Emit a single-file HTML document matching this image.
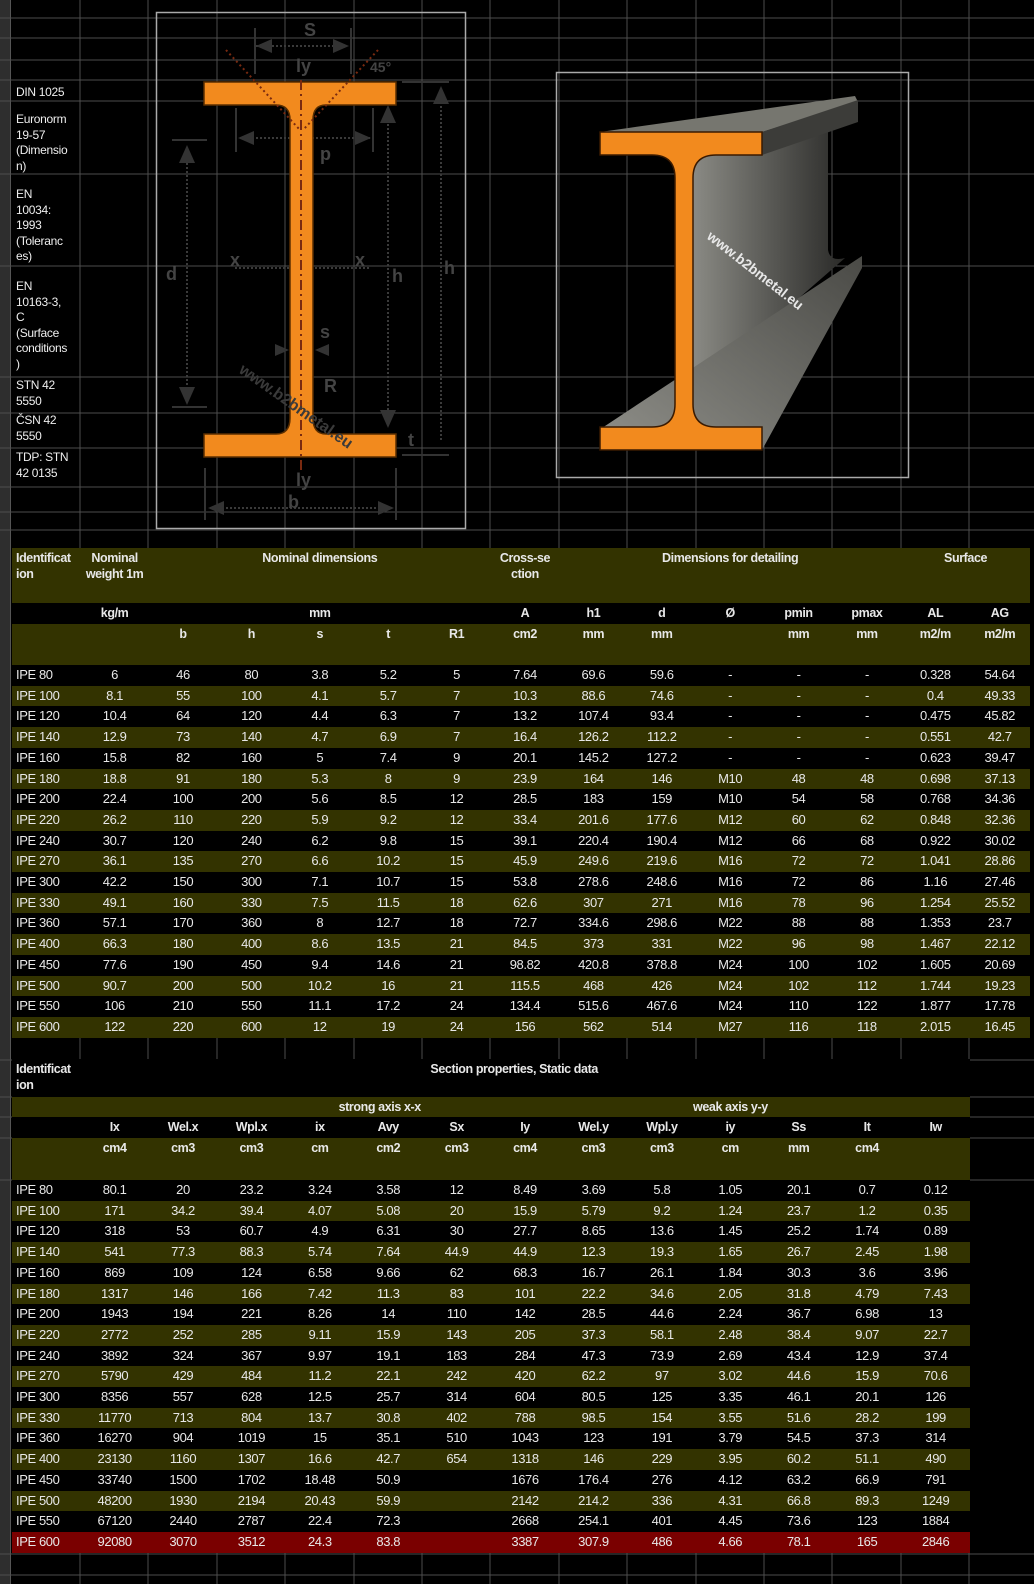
<!DOCTYPE html>
<html><head><meta charset="utf-8">
<style>
html,body{margin:0;padding:0;background:#000;}
body{width:1034px;height:1584px;position:relative;overflow:hidden;font-family:"Liberation Sans",sans-serif;color:#e8e8e8;}
.grid{position:absolute;left:0;top:0;}
.side{position:absolute;left:0;top:0;width:10px;height:1584px;background:#2e2e2e;border-right:1px solid #555;}
.std{position:absolute;left:16px;font-size:12px;line-height:15.6px;color:#eee;letter-spacing:-0.3px;}
table{position:absolute;border-collapse:collapse;table-layout:fixed;font-size:13px;}
td{padding:0;text-align:center;overflow:hidden;white-space:nowrap;letter-spacing:-0.4px;}
td:first-child{text-align:left;padding-left:4px;}
.o{background:#333300;}
.b{background:#000;}
.r{background:#7a0000;}
.h td{font-weight:bold;font-size:12.5px;vertical-align:top;padding-top:3px;white-space:normal;line-height:15.5px;}
.d td{height:20.7px;line-height:20.7px;}
</style></head><body>
<div class="side"></div>
<svg class="grid" width="1034" height="1584" viewBox="0 0 1034 1584">
<g stroke="#4d4d4d" stroke-width="1">
<line x1="80" y1="0" x2="80" y2="1584"/><line x1="148" y1="0" x2="148" y2="1584"/><line x1="217" y1="0" x2="217" y2="1584"/><line x1="285" y1="0" x2="285" y2="1584"/><line x1="354" y1="0" x2="354" y2="1584"/><line x1="422" y1="0" x2="422" y2="1584"/><line x1="490" y1="0" x2="490" y2="1584"/><line x1="559" y1="0" x2="559" y2="1584"/><line x1="627" y1="0" x2="627" y2="1584"/><line x1="696" y1="0" x2="696" y2="1584"/><line x1="764" y1="0" x2="764" y2="1584"/><line x1="832" y1="0" x2="832" y2="1584"/><line x1="901" y1="0" x2="901" y2="1584"/><line x1="969" y1="0" x2="969" y2="1584"/>
<line x1="0" y1="18" x2="1034" y2="18"/><line x1="0" y1="38" x2="1034" y2="38"/><line x1="0" y1="60" x2="1034" y2="60"/><line x1="0" y1="80" x2="1034" y2="80"/><line x1="0" y1="101" x2="1034" y2="101"/><line x1="0" y1="174" x2="1034" y2="174"/><line x1="0" y1="266" x2="1034" y2="266"/><line x1="0" y1="377" x2="1034" y2="377"/><line x1="0" y1="413" x2="1034" y2="413"/><line x1="0" y1="448" x2="1034" y2="448"/><line x1="0" y1="487" x2="1034" y2="487"/><line x1="0" y1="512" x2="1034" y2="512"/><line x1="0" y1="530" x2="1034" y2="530"/>
<line x1="0" y1="1060" x2="1034" y2="1060"/><line x1="0" y1="1097" x2="1034" y2="1097"/><line x1="0" y1="1117" x2="1034" y2="1117"/><line x1="0" y1="1138" x2="1034" y2="1138"/><line x1="0" y1="1180" x2="1034" y2="1180"/><line x1="0" y1="1554" x2="1034" y2="1554"/><line x1="0" y1="1575" x2="1034" y2="1575"/>
</g>
<!-- left drawing -->
<rect x="156.5" y="12.5" width="309" height="516" fill="none" stroke="#aaa" stroke-width="1.5"/>
<g fill="none" stroke="#3a3a3a" stroke-width="2" stroke-dasharray="2 2">
<line x1="187" y1="155" x2="187" y2="400"/><line x1="388" y1="120" x2="388" y2="425"/><line x1="441" y1="90" x2="441" y2="440"/>
<line x1="256" y1="46" x2="346" y2="46"/><line x1="240" y1="138" x2="370" y2="138"/><line x1="210" y1="508" x2="392" y2="508"/>
<line x1="235" y1="268" x2="370" y2="268"/>
</g>
<g stroke="#333" stroke-width="2"><line x1="255" y1="28" x2="255" y2="74"/><line x1="351" y1="28" x2="351" y2="74"/><line x1="236" y1="108" x2="236" y2="152"/><line x1="373" y1="108" x2="373" y2="152"/><line x1="172" y1="140" x2="207" y2="140"/><line x1="172" y1="407" x2="207" y2="407"/><line x1="402" y1="82" x2="449" y2="82"/><line x1="402" y1="455" x2="449" y2="455"/><line x1="205" y1="468" x2="205" y2="520"/><line x1="396" y1="468" x2="396" y2="520"/></g>
<g fill="#333"><path d="M187 145 l-8 18 h16z"/><path d="M187 405 l-8 -18 h16z"/><path d="M441 86 l-8 18 h16z"/><path d="M388 105 l-8 18 h16z"/><path d="M388 428 l-8 -18 h16z"/><path d="M256 46 l16 -7 v14z"/><path d="M349 46 l-16 -7 v14z"/><path d="M238 138 l16 -7 v14z"/><path d="M371 138 l-16 -7 v14z"/><path d="M208 508 l16 -7 v14z"/><path d="M394 508 l-16 -7 v14z"/><path d="M289 350 l-14 -6 v12z"/><path d="M315 350 l14 -6 v12z"/></g>
<path d="M204 82 H396 V105 H326 Q313 105 313 120 V418 Q313 434 326 434 H396 V457 H204 V434 H276 Q290 434 290 418 V120 Q290 105 276 105 H204 Z" fill="#f28a1e" stroke="#5a2e00" stroke-width="1.5"/>
<g stroke="#7a2a10" stroke-width="2" stroke-dasharray="2 3" fill="none"><line x1="226" y1="50" x2="300" y2="130"/><line x1="378" y1="50" x2="303" y2="130"/><line x1="301" y1="80" x2="301" y2="470" stroke-dasharray="10 4 2 4"/></g>
<g font-family="Liberation Sans,sans-serif" font-weight="bold" fill="#444" font-size="18"><text x="304" y="36">S</text><text x="296" y="72">ly</text><text x="320" y="160">p</text><text x="166" y="280">d</text><text x="230" y="266">x</text><text x="355" y="266">x</text><text x="392" y="282">h</text><text x="444" y="274">h</text><text x="320" y="338">s</text><text x="324" y="392">R</text><text x="296" y="486">ly</text><text x="288" y="508">b</text><text x="408" y="446">t</text><text x="370" y="72" font-size="14">45°</text></g>
<text x="238" y="372" transform="rotate(35 238 372)" font-family="Liberation Sans,sans-serif" font-weight="bold" font-size="16" fill="#3a3a3a">www.b2bmetal.eu</text>
<!-- right drawing -->
<rect x="556.5" y="72.5" width="352" height="405" fill="none" stroke="#aaa" stroke-width="1.5"/>
<defs>
<linearGradient id="g1" x1="0" x2="1"><stop offset="0" stop-color="#8a8a84"/><stop offset="1" stop-color="#2a2a28"/></linearGradient>
<linearGradient id="g2" x1="0" y1="1" x2="1" y2="0"><stop offset="0" stop-color="#8f8f89"/><stop offset="1" stop-color="#4a4a46"/></linearGradient>
</defs>
<path d="M693 150 L828 118 V250 Q830 262 845 258 L693 390 Z" fill="url(#g1)"/>
<path d="M600 132 L855 96 L858 102 L762 132 Z" fill="#76766f"/>
<path d="M762 132 L858 100 V122 L762 155 Z" fill="#3c3c39"/>
<path d="M602 428 L862 256 V268 L762 450 L762 428 Z" fill="url(#g2)"/>
<path d="M600 132 H762 V155 H716 Q693 155 693 178 V404 Q693 427 716 427 H762 V450 H600 V427 H652 Q675 427 675 404 V178 Q675 155 652 155 H600 Z" fill="#f28a1e" stroke="#3a1a00" stroke-width="1.5"/>
<text x="706" y="238" transform="rotate(38 706 238)" font-family="Liberation Sans,sans-serif" font-weight="bold" font-size="14" fill="#e8e8e8">www.b2bmetal.eu</text>
</svg>

<div class="std" style="top:85px">DIN 1025</div>
<div class="std" style="top:112px">Euronorm<br>19-57<br>(Dimensio<br>n)</div>
<div class="std" style="top:187px">EN<br>10034:<br>1993<br>(Toleranc<br>es)</div>
<div class="std" style="top:279px">EN<br>10163-3,<br>C<br>(Surface<br>conditions<br>)</div>
<div class="std" style="top:378px">STN 42<br>5550</div>
<div class="std" style="top:413px">ČSN 42<br>5550</div>
<div class="std" style="top:450px">TDP: STN<br>42 0135</div>

<table style="left:12px;top:548px;width:1018px">
<colgroup><col style="width:68.4px"><col style="width:68.4px"><col style="width:68.4px"><col style="width:68.4px"><col style="width:68.4px"><col style="width:68.4px"><col style="width:68.4px"><col style="width:68.4px"><col style="width:68.4px"><col style="width:68.4px"><col style="width:68.4px"><col style="width:68.4px"><col style="width:68.4px"><col style="width:68.4px"><col style="width:60.4px"></colgroup>
<tr class="h o" style="height:55px"><td>Identificat ion</td><td>Nominal weight 1m</td><td colspan="5">Nominal dimensions</td><td>Cross-se ction</td><td colspan="5">Dimensions for detailing</td><td colspan="2">Surface</td></tr>
<tr class="h b" style="height:21px"><td></td><td>kg/m</td><td colspan="5">mm</td><td>A</td><td>h1</td><td>d</td><td>Ø</td><td>pmin</td><td>pmax</td><td>AL</td><td>AG</td></tr>
<tr class="h o" style="height:41px"><td></td><td></td><td>b</td><td>h</td><td>s</td><td>t</td><td>R1</td><td>cm2</td><td>mm</td><td>mm</td><td></td><td>mm</td><td>mm</td><td>m2/m</td><td>m2/m</td></tr>
<tr class="d b"><td>IPE 80</td><td>6</td><td>46</td><td>80</td><td>3.8</td><td>5.2</td><td>5</td><td>7.64</td><td>69.6</td><td>59.6</td><td>-</td><td>-</td><td>-</td><td>0.328</td><td>54.64</td></tr>
<tr class="d o"><td>IPE 100</td><td>8.1</td><td>55</td><td>100</td><td>4.1</td><td>5.7</td><td>7</td><td>10.3</td><td>88.6</td><td>74.6</td><td>-</td><td>-</td><td>-</td><td>0.4</td><td>49.33</td></tr>
<tr class="d b"><td>IPE 120</td><td>10.4</td><td>64</td><td>120</td><td>4.4</td><td>6.3</td><td>7</td><td>13.2</td><td>107.4</td><td>93.4</td><td>-</td><td>-</td><td>-</td><td>0.475</td><td>45.82</td></tr>
<tr class="d o"><td>IPE 140</td><td>12.9</td><td>73</td><td>140</td><td>4.7</td><td>6.9</td><td>7</td><td>16.4</td><td>126.2</td><td>112.2</td><td>-</td><td>-</td><td>-</td><td>0.551</td><td>42.7</td></tr>
<tr class="d b"><td>IPE 160</td><td>15.8</td><td>82</td><td>160</td><td>5</td><td>7.4</td><td>9</td><td>20.1</td><td>145.2</td><td>127.2</td><td>-</td><td>-</td><td>-</td><td>0.623</td><td>39.47</td></tr>
<tr class="d o"><td>IPE 180</td><td>18.8</td><td>91</td><td>180</td><td>5.3</td><td>8</td><td>9</td><td>23.9</td><td>164</td><td>146</td><td>M10</td><td>48</td><td>48</td><td>0.698</td><td>37.13</td></tr>
<tr class="d b"><td>IPE 200</td><td>22.4</td><td>100</td><td>200</td><td>5.6</td><td>8.5</td><td>12</td><td>28.5</td><td>183</td><td>159</td><td>M10</td><td>54</td><td>58</td><td>0.768</td><td>34.36</td></tr>
<tr class="d o"><td>IPE 220</td><td>26.2</td><td>110</td><td>220</td><td>5.9</td><td>9.2</td><td>12</td><td>33.4</td><td>201.6</td><td>177.6</td><td>M12</td><td>60</td><td>62</td><td>0.848</td><td>32.36</td></tr>
<tr class="d b"><td>IPE 240</td><td>30.7</td><td>120</td><td>240</td><td>6.2</td><td>9.8</td><td>15</td><td>39.1</td><td>220.4</td><td>190.4</td><td>M12</td><td>66</td><td>68</td><td>0.922</td><td>30.02</td></tr>
<tr class="d o"><td>IPE 270</td><td>36.1</td><td>135</td><td>270</td><td>6.6</td><td>10.2</td><td>15</td><td>45.9</td><td>249.6</td><td>219.6</td><td>M16</td><td>72</td><td>72</td><td>1.041</td><td>28.86</td></tr>
<tr class="d b"><td>IPE 300</td><td>42.2</td><td>150</td><td>300</td><td>7.1</td><td>10.7</td><td>15</td><td>53.8</td><td>278.6</td><td>248.6</td><td>M16</td><td>72</td><td>86</td><td>1.16</td><td>27.46</td></tr>
<tr class="d o"><td>IPE 330</td><td>49.1</td><td>160</td><td>330</td><td>7.5</td><td>11.5</td><td>18</td><td>62.6</td><td>307</td><td>271</td><td>M16</td><td>78</td><td>96</td><td>1.254</td><td>25.52</td></tr>
<tr class="d b"><td>IPE 360</td><td>57.1</td><td>170</td><td>360</td><td>8</td><td>12.7</td><td>18</td><td>72.7</td><td>334.6</td><td>298.6</td><td>M22</td><td>88</td><td>88</td><td>1.353</td><td>23.7</td></tr>
<tr class="d o"><td>IPE 400</td><td>66.3</td><td>180</td><td>400</td><td>8.6</td><td>13.5</td><td>21</td><td>84.5</td><td>373</td><td>331</td><td>M22</td><td>96</td><td>98</td><td>1.467</td><td>22.12</td></tr>
<tr class="d b"><td>IPE 450</td><td>77.6</td><td>190</td><td>450</td><td>9.4</td><td>14.6</td><td>21</td><td>98.82</td><td>420.8</td><td>378.8</td><td>M24</td><td>100</td><td>102</td><td>1.605</td><td>20.69</td></tr>
<tr class="d o"><td>IPE 500</td><td>90.7</td><td>200</td><td>500</td><td>10.2</td><td>16</td><td>21</td><td>115.5</td><td>468</td><td>426</td><td>M24</td><td>102</td><td>112</td><td>1.744</td><td>19.23</td></tr>
<tr class="d b"><td>IPE 550</td><td>106</td><td>210</td><td>550</td><td>11.1</td><td>17.2</td><td>24</td><td>134.4</td><td>515.6</td><td>467.6</td><td>M24</td><td>110</td><td>122</td><td>1.877</td><td>17.78</td></tr>
<tr class="d o"><td>IPE 600</td><td>122</td><td>220</td><td>600</td><td>12</td><td>19</td><td>24</td><td>156</td><td>562</td><td>514</td><td>M27</td><td>116</td><td>118</td><td>2.015</td><td>16.45</td></tr>
</table>

<table style="left:12px;top:1059px;width:958px">
<colgroup><col style="width:68.4px"><col style="width:68.4px"><col style="width:68.4px"><col style="width:68.4px"><col style="width:68.4px"><col style="width:68.4px"><col style="width:68.4px"><col style="width:68.4px"><col style="width:68.4px"><col style="width:68.4px"><col style="width:68.4px"><col style="width:68.4px"><col style="width:68.4px"><col style="width:68.4px"></colgroup>
<tr class="h b" style="height:38px"><td>Identificat ion</td><td colspan="13" style="text-align:left;padding-left:350px">Section properties, Static data</td></tr>
<tr class="h o" style="height:20px"><td></td><td colspan="6" style="text-align:right;padding-right:70px">strong axis x-x</td><td colspan="7">weak axis y-y</td></tr>
<tr class="h b" style="height:21px"><td></td><td>Ix</td><td>Wel.x</td><td>Wpl.x</td><td>ix</td><td>Avy</td><td>Sx</td><td>Iy</td><td>Wel.y</td><td>Wpl.y</td><td>iy</td><td>Ss</td><td>It</td><td>Iw</td></tr>
<tr class="h o" style="height:42px"><td></td><td>cm4</td><td>cm3</td><td>cm3</td><td>cm</td><td>cm2</td><td>cm3</td><td>cm4</td><td>cm3</td><td>cm3</td><td>cm</td><td>mm</td><td>cm4</td><td></td></tr>
<tr class="d b"><td>IPE 80</td><td>80.1</td><td>20</td><td>23.2</td><td>3.24</td><td>3.58</td><td>12</td><td>8.49</td><td>3.69</td><td>5.8</td><td>1.05</td><td>20.1</td><td>0.7</td><td>0.12</td></tr>
<tr class="d o"><td>IPE 100</td><td>171</td><td>34.2</td><td>39.4</td><td>4.07</td><td>5.08</td><td>20</td><td>15.9</td><td>5.79</td><td>9.2</td><td>1.24</td><td>23.7</td><td>1.2</td><td>0.35</td></tr>
<tr class="d b"><td>IPE 120</td><td>318</td><td>53</td><td>60.7</td><td>4.9</td><td>6.31</td><td>30</td><td>27.7</td><td>8.65</td><td>13.6</td><td>1.45</td><td>25.2</td><td>1.74</td><td>0.89</td></tr>
<tr class="d o"><td>IPE 140</td><td>541</td><td>77.3</td><td>88.3</td><td>5.74</td><td>7.64</td><td>44.9</td><td>44.9</td><td>12.3</td><td>19.3</td><td>1.65</td><td>26.7</td><td>2.45</td><td>1.98</td></tr>
<tr class="d b"><td>IPE 160</td><td>869</td><td>109</td><td>124</td><td>6.58</td><td>9.66</td><td>62</td><td>68.3</td><td>16.7</td><td>26.1</td><td>1.84</td><td>30.3</td><td>3.6</td><td>3.96</td></tr>
<tr class="d o"><td>IPE 180</td><td>1317</td><td>146</td><td>166</td><td>7.42</td><td>11.3</td><td>83</td><td>101</td><td>22.2</td><td>34.6</td><td>2.05</td><td>31.8</td><td>4.79</td><td>7.43</td></tr>
<tr class="d b"><td>IPE 200</td><td>1943</td><td>194</td><td>221</td><td>8.26</td><td>14</td><td>110</td><td>142</td><td>28.5</td><td>44.6</td><td>2.24</td><td>36.7</td><td>6.98</td><td>13</td></tr>
<tr class="d o"><td>IPE 220</td><td>2772</td><td>252</td><td>285</td><td>9.11</td><td>15.9</td><td>143</td><td>205</td><td>37.3</td><td>58.1</td><td>2.48</td><td>38.4</td><td>9.07</td><td>22.7</td></tr>
<tr class="d b"><td>IPE 240</td><td>3892</td><td>324</td><td>367</td><td>9.97</td><td>19.1</td><td>183</td><td>284</td><td>47.3</td><td>73.9</td><td>2.69</td><td>43.4</td><td>12.9</td><td>37.4</td></tr>
<tr class="d o"><td>IPE 270</td><td>5790</td><td>429</td><td>484</td><td>11.2</td><td>22.1</td><td>242</td><td>420</td><td>62.2</td><td>97</td><td>3.02</td><td>44.6</td><td>15.9</td><td>70.6</td></tr>
<tr class="d b"><td>IPE 300</td><td>8356</td><td>557</td><td>628</td><td>12.5</td><td>25.7</td><td>314</td><td>604</td><td>80.5</td><td>125</td><td>3.35</td><td>46.1</td><td>20.1</td><td>126</td></tr>
<tr class="d o"><td>IPE 330</td><td>11770</td><td>713</td><td>804</td><td>13.7</td><td>30.8</td><td>402</td><td>788</td><td>98.5</td><td>154</td><td>3.55</td><td>51.6</td><td>28.2</td><td>199</td></tr>
<tr class="d b"><td>IPE 360</td><td>16270</td><td>904</td><td>1019</td><td>15</td><td>35.1</td><td>510</td><td>1043</td><td>123</td><td>191</td><td>3.79</td><td>54.5</td><td>37.3</td><td>314</td></tr>
<tr class="d o"><td>IPE 400</td><td>23130</td><td>1160</td><td>1307</td><td>16.6</td><td>42.7</td><td>654</td><td>1318</td><td>146</td><td>229</td><td>3.95</td><td>60.2</td><td>51.1</td><td>490</td></tr>
<tr class="d b"><td>IPE 450</td><td>33740</td><td>1500</td><td>1702</td><td>18.48</td><td>50.9</td><td></td><td>1676</td><td>176.4</td><td>276</td><td>4.12</td><td>63.2</td><td>66.9</td><td>791</td></tr>
<tr class="d o"><td>IPE 500</td><td>48200</td><td>1930</td><td>2194</td><td>20.43</td><td>59.9</td><td></td><td>2142</td><td>214.2</td><td>336</td><td>4.31</td><td>66.8</td><td>89.3</td><td>1249</td></tr>
<tr class="d b"><td>IPE 550</td><td>67120</td><td>2440</td><td>2787</td><td>22.4</td><td>72.3</td><td></td><td>2668</td><td>254.1</td><td>401</td><td>4.45</td><td>73.6</td><td>123</td><td>1884</td></tr>
<tr class="d r"><td>IPE 600</td><td>92080</td><td>3070</td><td>3512</td><td>24.3</td><td>83.8</td><td></td><td>3387</td><td>307.9</td><td>486</td><td>4.66</td><td>78.1</td><td>165</td><td>2846</td></tr>
</table>
</body></html>
